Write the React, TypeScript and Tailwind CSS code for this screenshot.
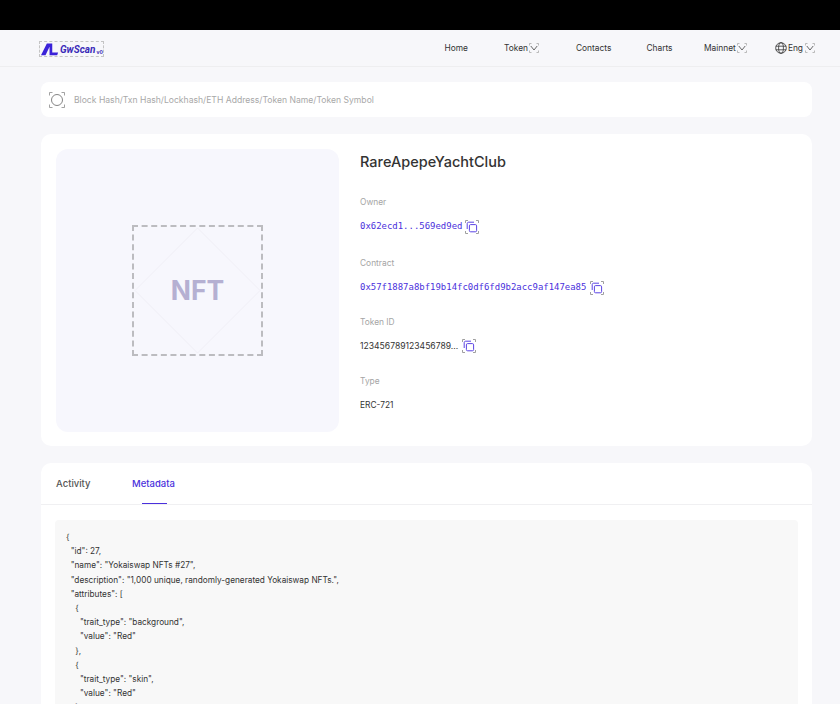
import React from "react";

const Chevron = () => (
  <svg width="10" height="10" viewBox="0 0 10 10" fill="none" className="shrink-0">
    <path d="M0.5 2.5V0.5H2.5M7.5 0.5H9.5V2.5M9.5 7.5V9.5H7.5M2.5 9.5H0.5V7.5" stroke="#a9a9a9" strokeWidth="0.8" />
    <path d="M1.8 3L5 7L8.2 3" stroke="#444444" strokeWidth="0.8" />
  </svg>
);

const Globe = () => (
  <svg width="12" height="12" viewBox="0 0 12 12" fill="none" stroke="#333333" strokeWidth="0.8" className="shrink-0">
    <circle cx="6" cy="6" r="5.3" />
    <ellipse cx="6" cy="6" rx="2.4" ry="5.3" />
    <path d="M0.8 4.2H11.2M0.8 7.8H11.2" />
  </svg>
);

const Copy = () => (
  <svg width="14" height="14" viewBox="0 0 14 14" fill="none" className="shrink-0">
    <path d="M0.5 3V0.5H3M11 0.5H13.5V3M13.5 11V13.5H11M3 13.5H0.5V11" stroke="#a0a0a0" strokeWidth="1" />
    <path d="M9 2.2H3.6C2.8 2.2 2.2 2.8 2.2 3.6V9" stroke="#5b44e4" strokeWidth="1" />
    <rect x="4.4" y="4.6" width="7.2" height="7.2" rx="1.2" stroke="#5b44e4" strokeWidth="1" />
  </svg>
);

const Row = ({ label, children, mt, gap }: { label: string; children: React.ReactNode; mt: string; gap: string }) => (
  <div className={mt}>
    <div className="text-[8.4px] leading-[12px] text-[#a5a5a5]">{label}</div>
    <div className={`${gap} flex h-[14px] items-center`}>{children}</div>
  </div>
);

const jsonLines = [
  "{",
  '  "id": 27,',
  '  "name": "Yokaiswap NFTs #27",',
  '  "description": "1,000 unique, randomly-generated Yokaiswap NFTs.",',
  '  "attributes": [',
  "    {",
  '      "trait_type": "background",',
  '      "value": "Red"',
  "    },",
  "    {",
  '      "trait_type": "skin",',
  '      "value": "Red"',
  "    },",
];

export default function App() {
  return (
    <div className="h-[704px] w-[840px] overflow-hidden bg-[#f7f7fa] font-['Inter',sans-serif]">
      <div className="h-[30px] bg-black" />
      <header className="flex h-[37px] items-center justify-between border-b border-[#eeeef0] pl-[39px] pr-[25px] pt-[1px] text-[8.4px] text-[#333333]">
        <div className="flex h-[16px] w-[65px] items-end border border-dashed border-[#c4c4c4]">
          <svg width="18" height="14" viewBox="0 0 20 14" className="ml-[1px] shrink-0">
            <path d="M0 14L6.5 1H12.5V11H19L18 14H9.5V4.5L5 14Z" fill="#3a22d8" />
          </svg>
          <span className="ml-[1px] font-['Roboto',sans-serif] text-[10px] font-bold italic leading-[13px] text-[#3a2ab8]">GwScan</span>
          <span className="ml-[1px] text-[5px] font-bold leading-[7px] text-[#3a2ab8]">v0</span>
        </div>
        <nav className="flex items-center">
          <span>Home</span>
          <span className="ml-[36px] flex items-center gap-[1px]">Token<Chevron /></span>
          <span className="ml-[37px]">Contacts</span>
          <span className="ml-[35px]">Charts</span>
          <span className="ml-[31.5px] flex items-center gap-[1px]">Mainnet<Chevron /></span>
          <span className="ml-[28px] flex items-center gap-[1px]"><Globe /><span className="mr-[1px]">Eng</span><Chevron /></span>
        </nav>
      </header>

      <main className="pl-[41px] pr-[28px]">
        <div className="mt-[15px] flex h-[35px] items-center rounded-[8px] bg-white pl-[8px]">
          <svg width="16" height="16" viewBox="0 0 16 16" fill="none" className="shrink-0">
            <path d="M0.5 3.5V0.5H3.5M12.5 0.5H15.5V3.5M15.5 12.5V15.5H12.5M3.5 15.5H0.5V12.5" stroke="#8a8a8a" strokeWidth="0.8" />
            <circle cx="8" cy="8" r="5.5" stroke="#777777" strokeWidth="0.9" />
          </svg>
          <span className="ml-[9px] pt-[1px] text-[8.6px] text-[#a8a8a8]">Block Hash/Txn Hash/Lockhash/ETH Address/Token Name/Token Symbol</span>
        </div>

        <section className="mt-[17px] flex h-[312px] rounded-[10px] bg-white p-[15px]">
          <div className="flex h-[283px] w-[283px] shrink-0 items-center justify-center rounded-[12px] bg-[#f7f7fd]">
            <div className="relative flex h-[131px] w-[131px] items-center justify-center border-2 border-dashed border-[#bcbcc0]">
              <svg width="127" height="127" viewBox="0 0 127 127" fill="none" className="absolute left-0 top-0">
                <path d="M63.5 1L126 63.5L63.5 126L1 63.5Z" stroke="#f0eff6" strokeWidth="1" />
              </svg>
              <span className="relative text-[26.5px] font-bold text-[#b5b0d2]">NFT</span>
            </div>
          </div>
          <div className="ml-[21px] min-w-0 flex-1">
            <h1 className="mt-[4px] text-[14.5px] font-medium leading-[18px] text-[#333333]">RareApepeYachtClub</h1>
            <Row label="Owner" mt="mt-[25px]" gap="mt-[12px]">
              <span className="font-['DejaVu_Sans_Mono',monospace] text-[8.96px] text-[#4a30dc]">0x62ecd1...569ed9ed</span>
              <span className="ml-[3px]"><Copy /></span>
            </Row>
            <Row label="Contract" mt="mt-[23px]" gap="mt-[12px]">
              <span className="font-['DejaVu_Sans_Mono',monospace] text-[8.96px] text-[#4a30dc]">0x57f1887a8bf19b14fc0df6fd9b2acc9af147ea85</span>
              <span className="ml-[4px]"><Copy /></span>
            </Row>
            <Row label="Token ID" mt="mt-[21px]" gap="mt-[11px]">
              <span className="text-[8.6px] text-[#333333]">123456789123456789...</span>
              <span className="ml-[4px]"><Copy /></span>
            </Row>
            <Row label="Type" mt="mt-[22px]" gap="mt-[11px]">
              <span className="text-[8.4px] text-[#333333]">ERC-721</span>
            </Row>
          </div>
        </section>

        <section className="mt-[17px] rounded-[10px] bg-white pb-[20px]">
          <div className="flex h-[42px] border-b border-[#f0f0f2] pl-[15px] text-[9.5px] font-medium">
            <span className="pt-[14px] text-[#555555]">Activity</span>
            <span className="relative ml-[41.5px] pt-[14px] text-[#4a30dc]">
              Metadata
              <span className="absolute bottom-[0px] left-[10px] h-[1px] w-[25px] bg-[#4a30dc]" />
            </span>
          </div>
          <div className="mx-[14px] mt-[15px] rounded-[4px] bg-[#f8f8f8] pb-[20px] pl-[11px] pt-[10px] text-[8.25px] leading-[14.2px] text-[#333333]">
            {jsonLines.map((l, i) => (
              <div key={i} className="whitespace-pre">{l}</div>
            ))}
          </div>
        </section>
      </main>
    </div>
  );
}
